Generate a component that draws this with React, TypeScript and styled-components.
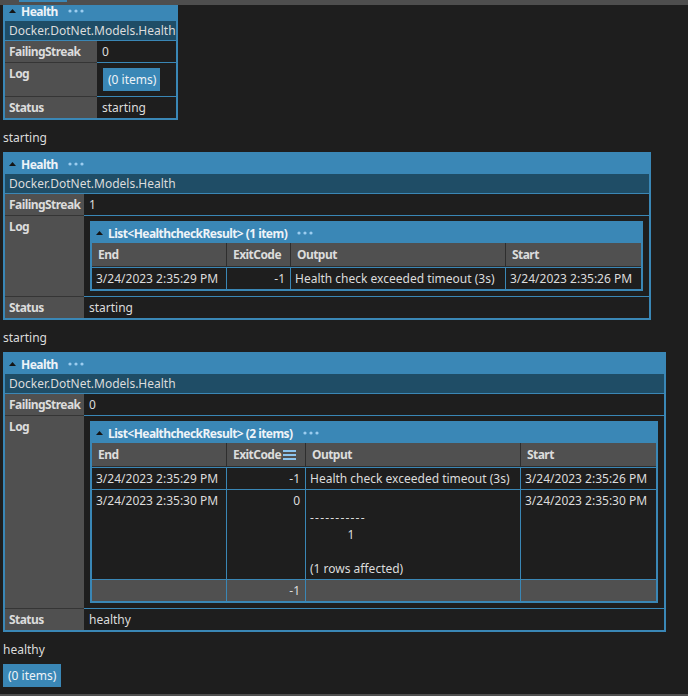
import React from 'react'
import styled, { createGlobalStyle } from 'styled-components'

const blue = '#3a87b6'
const gray = '#505050'
const ink = '#dcdcdc'

const GlobalStyle = createGlobalStyle`
    html, body {
        margin: 0;
        padding: 0;
        background: #1e1e1e;
        overflow: hidden;
    }
    body {
        font-family: 'Noto Sans', 'Segoe UI', sans-serif;
        font-size: 12px;
        color: ${ink};
    }
`

const Page = styled.div`
    margin-top: -1px;
    padding-left: 3px;
`

const ScrollTrack = styled.div<{ $edge: 'top' | 'bottom' }>`
    position: fixed;
    left: 0;
    right: 0;
    ${(p) => (p.$edge === 'top' ? 'top: 0; height: 5px;' : 'bottom: 0; height: 2px;')}
    background: #4e4e4e;
    z-index: 2;
`

const Thumb = styled.div`
    position: absolute;
    left: 19px;
    top: 0;
    width: 48px;
    height: 2px;
    background: ${blue};
`

const Dump = styled.div<{ $width: number }>`
    width: ${(p) => p.$width}px;
    box-sizing: border-box;
    border: 2px solid ${blue};
    background: #1e1e1e;
`

const Header = styled.div`
    display: flex;
    align-items: center;
    height: 20px;
    padding-left: 4px;
    background: ${blue};
    color: #eef3f8;
    font-weight: bold;
    letter-spacing: -0.55px;
    white-space: nowrap;
`

const Title = styled.span`
    margin-left: 5px;
`

const DotsWrap = styled.span`
    display: inline-flex;
    margin-left: 10px;
`

const TypeRow = styled.div`
    background: #1f4d66;
    padding: 1px 4px;
    line-height: 17px;
    border-bottom: 1px solid ${blue};
    white-space: nowrap;
`

const PropRow = styled.div<{ $label: number }>`
    display: grid;
    grid-template-columns: ${(p) => p.$label}px 1fr;
    & + & > * {
        border-top: 1px solid ${blue};
    }
    & + & > :first-child {
        border-top-color: #353535;
    }
`

const Label = styled.div`
    background: ${gray};
    font-weight: bold;
    letter-spacing: -0.55px;
    padding: 2px 4px;
    line-height: 17px;
    white-space: nowrap;
`

const Value = styled.div<{ $block?: boolean }>`
    padding: ${(p) => (p.$block ? '5px 6px' : '2px 5px')};
    line-height: 17px;
    min-width: 0;
`

const Items = styled.div<{ $width: number }>`
    width: ${(p) => p.$width}px;
    box-sizing: border-box;
    padding: 3px 5px;
    line-height: 17px;
    background: ${blue};
    color: #eef3f8;
    white-space: nowrap;
`

const Row = styled.div<{ $cols: string; $kind: 'head' | 'data' | 'foot' }>`
    display: grid;
    grid-template-columns: ${(p) => p.$cols};
    background: ${(p) => (p.$kind === 'data' ? 'transparent' : gray)};
    font-weight: ${(p) => (p.$kind === 'head' ? 'bold' : 'normal')};
    letter-spacing: ${(p) => (p.$kind === 'head' ? '-0.55px' : 'normal')};
    border-bottom: ${(p) => (p.$kind === 'head' ? '1px solid #2e2e2e' : 'none')};
    & + & {
        border-top: ${(p) => (p.$kind === 'head' ? 'none' : `1px solid ${blue}`)};
    }
    ${(p) => (p.$kind === 'head' ? '' : '&:nth-child(3) { border-top: none; }')}
    & > * + * {
        border-left: 1px solid ${(p) => (p.$kind === 'head' ? '#2e2e2e' : blue)};
    }
`

const Cell = styled.div<{ $right?: boolean; $head?: boolean }>`
    box-sizing: border-box;
    padding: ${(p) => (p.$head ? '3px 6px' : '2px 5px 2px 4px')};
    line-height: 17px;
    white-space: pre;
    overflow: hidden;
    display: flex;
    align-items: flex-start;
    justify-content: ${(p) => (p.$right ? 'flex-end' : 'flex-start')};
`

const Lines = styled.div`
    white-space: pre;
`

const Rule = styled.span`
    letter-spacing: 1.2px;
`

const Loose = styled.div`
    line-height: 17px;
    padding: 9px 0 6px;
`

const Caret = () => (
    <svg width='7' height='4' viewBox='0 0 7 4'>
        <path d='M0 4 L3.5 0 L7 4 Z' fill='#151515' />
    </svg>
)

const Dots = () => (
    <DotsWrap>
        <svg width='16' height='4' viewBox='0 0 16 4'>
            <circle cx='2' cy='2' r='1.6' fill='#9ccdf0' />
            <circle cx='8' cy='2' r='1.6' fill='#9ccdf0' />
            <circle cx='14' cy='2' r='1.6' fill='#9ccdf0' />
        </svg>
    </DotsWrap>
)

const MenuIcon = () => (
    <svg width='13' height='10' viewBox='0 0 13 10' style={{ marginLeft: 2, marginTop: 4 }}>
        <rect x='0' y='0' width='13' height='2' fill='#8cc4ee' />
        <rect x='0' y='4' width='13' height='2' fill='#8cc4ee' />
        <rect x='0' y='8' width='13' height='2' fill='#8cc4ee' />
    </svg>
)

type Result = { end: string; exit: number; output: React.ReactNode; start: string }

const ResultList = ({ items, cols, width, menu }: { items: Result[]; cols: string; width: number; menu?: boolean }) => (
    <Dump $width={width}>
        <Header>
            <Caret />
            <Title>
                List&lt;HealthcheckResult&gt; ({items.length} {items.length === 1 ? 'item' : 'items'})
            </Title>
            <Dots />
        </Header>
        <Row $cols={cols} $kind='head'>
            <Cell $head>End</Cell>
            <Cell $head>
                ExitCode{menu && <MenuIcon />}
            </Cell>
            <Cell $head>Output</Cell>
            <Cell $head>Start</Cell>
        </Row>
        {items.map((r) => (
            <Row key={r.end} $cols={cols} $kind='data'>
                <Cell>{r.end}</Cell>
                <Cell $right>{r.exit}</Cell>
                <Cell>{r.output}</Cell>
                <Cell>{r.start}</Cell>
            </Row>
        ))}
        {items.length > 1 && (
            <Row $cols={cols} $kind='foot'>
                <Cell />
                <Cell $right>{items.reduce((s, r) => s + r.exit, 0)}</Cell>
                <Cell />
                <Cell />
            </Row>
        )}
    </Dump>
)

const Health = ({
    width,
    label,
    streak,
    status,
    children,
}: {
    width: number
    label: number
    streak: number
    status: string
    children: React.ReactNode
}) => (
    <Dump $width={width}>
        <Header>
            <Caret />
            <Title>Health</Title>
            <Dots />
        </Header>
        <TypeRow>Docker.DotNet.Models.Health</TypeRow>
        <PropRow $label={label}>
            <Label>FailingStreak</Label>
            <Value>{streak}</Value>
        </PropRow>
        <PropRow $label={label}>
            <Label>Log</Label>
            <Value $block>{children}</Value>
        </PropRow>
        <PropRow $label={label}>
            <Label>Status</Label>
            <Value>{status}</Value>
        </PropRow>
    </Dump>
)

const first: Result = {
    end: '3/24/2023 2:35:29 PM',
    exit: -1,
    output: 'Health check exceeded timeout (3s)',
    start: '3/24/2023 2:35:26 PM',
}

const second: Result = {
    end: '3/24/2023 2:35:30 PM',
    exit: 0,
    output: (
        <Lines>
            {'\n'}
            <Rule>-----------</Rule>
            {'\n            1\n\n(1 rows affected)'}
        </Lines>
    ),
    start: '3/24/2023 2:35:30 PM',
}

export default function App() {
    return (
        <>
            <GlobalStyle />
            <ScrollTrack $edge='top'>
                <Thumb />
            </ScrollTrack>
            <Page>
                <Health width={175} label={92} streak={0} status='starting'>
                    <Items $width={57}>(0 items)</Items>
                </Health>
                <Loose>starting</Loose>
                <Health width={648} label={79} streak={1} status='starting'>
                    <ResultList items={[first]} cols='134px 64px 215px 136px' width={553} />
                </Health>
                <Loose>starting</Loose>
                <Health width={663} label={79} streak={0} status='healthy'>
                    <ResultList items={[first, second]} cols='134px 79px 215px 136px' width={568} menu />
                </Health>
                <Loose>healthy</Loose>
                <Items $width={58}>(0 items)</Items>
            </Page>
            <ScrollTrack $edge='bottom' />
        </>
    )
}
